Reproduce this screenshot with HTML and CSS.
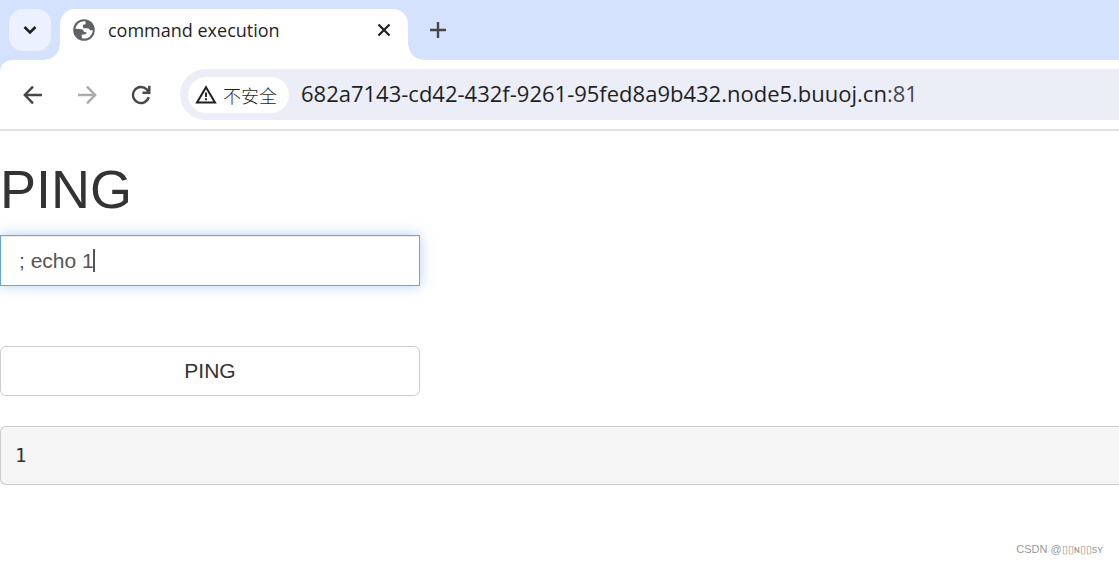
FILE: index.html
```html
<!DOCTYPE html>
<html lang="zh-CN">
<head>
    <meta charset="UTF-8">
    <meta name="viewport" content="width=device-width, initial-scale=1.0">
    <title>command execution</title>
    <link rel="stylesheet" href="styles.css">
</head>
<body>
    <header class="browser">
        <div class="tab-strip">
            <button type="button" class="tab-search" aria-label="Search tabs">
                <svg width="14" height="10" viewBox="0 0 14 10"><path d="M1.500 2 L7 7.500 L12.500 2" fill="none" stroke="#1f1f1f" stroke-width="2.600"/></svg>
            </button>
            <div class="tab">
                <svg class="globe" width="22" height="22" viewBox="0 0 22 22">
                    <circle cx="11" cy="11" r="10.800" fill="#5f6368"/>
                    <path d="M12.500 2.300 C7.500 1.800 3.300 4.800 2.400 9.800 L6.500 10 Q10.600 10 11 13 L13.500 13.200 Q13.800 15.200 11.800 15.400 L8.800 15.600 L8.800 19.300 C15 20.700 19.700 16.300 19.700 11.200 L17 11.200 Q16.400 9 13.800 9.200 L10.600 9.200 Q8.800 6.400 10.800 5.600 L12.500 5.200 Z" fill="#fff"/>
                </svg>
                <span class="tab-title">command execution</span>
                <button type="button" class="tab-close" aria-label="Close tab">
                    <svg width="14" height="14" viewBox="0 0 14 14"><path d="M1.500 1.500 L12.500 12.500 M12.500 1.500 L1.500 12.500" stroke="#1f1f1f" stroke-width="2.200"/></svg>
                </button>
            </div>
            <button type="button" class="new-tab" aria-label="New tab">
                <svg width="16" height="16" viewBox="0 0 16 16"><path d="M8 0 V16 M0 8 H16" stroke="#474747" stroke-width="2.400"/></svg>
            </button>
        </div>
        <nav class="toolbar">
            <button type="button" class="tool" aria-label="Back">
                <svg width="20" height="20" viewBox="0 0 20 20"><path d="M19 10 H2.500 M10 1.700 L1.800 10 L10 18.300" fill="none" stroke="#474747" stroke-width="2.400"/></svg>
            </button>
            <button type="button" class="tool" aria-label="Forward" disabled>
                <svg width="20" height="20" viewBox="0 0 20 20"><path d="M1 10 H17.500 M10 1.700 L18.200 10 L10 18.300" fill="none" stroke="#ababab" stroke-width="2.400"/></svg>
            </button>
            <button type="button" class="tool" aria-label="Reload">
                <svg width="20" height="20" viewBox="0 0 20 20"><path d="M17.700 12.200 A8 8 0 1 1 15.700 4.400 L17.500 6.300 M18.300 0.800 V7.700 H11.500" fill="none" stroke="#474747" stroke-width="2.400"/></svg>
            </button>
            <div class="omnibox">
                <button type="button" class="security">
                    <svg width="22" height="19" viewBox="0 0 22 19"><path d="M11 2.200 L20 17.400 H2 Z" fill="none" stroke="#1f1f1f" stroke-width="2"/><path d="M11 7.500 V12 M11 13.300 V15.300" stroke="#1f1f1f" stroke-width="1.900"/></svg>
                    <span>不安全</span>
                </button>
                <label class="address">
                    <input type="text" class="host" aria-label="Address" spellcheck="false" value="682a7143-cd42-432f-9261-95fed8a9b432.node5.buuoj.cn">
                    <span class="port">:81</span>
                </label>
            </div>
        </nav>
    </header>

    <main>
        <h1>PING</h1>
        <form class="ping-form">
            <div class="field">
                <input type="text" class="form-control" name="ip" aria-label="PING" autocomplete="off" value="; echo 1">
                <span class="caret"></span>
            </div>
            <button type="submit" class="btn">PING</button>
        </form>
        <pre>1</pre>
    </main>
    <footer>CSDN @▯▯ɴ▯▯sʏ</footer>
</body>
</html>
```
FILE: styles.css
```css
* {
    box-sizing: border-box;
}
body {
    margin: 0;
    min-height: 100vh;
    display: flex;
    flex-direction: column;
    background-color: #fff;
    color: #333;
    font-family: "Liberation Sans", Arial, sans-serif;
    overflow-x: hidden;
}
button, input {
    font: inherit;
    color: inherit;
    margin: 0;
    padding: 0;
    border: none;
    background: none;
}
svg {
    display: block;
    flex: none;
}

/* Browser frame */
.browser {
    background-color: #d5e2fd;
    color: #1f1f1f;
    font-family: "Open Sans", "Noto Sans CJK SC", sans-serif;
}
.tab-strip {
    display: flex;
    align-items: flex-end;
    height: 60px;
    padding-left: 9px;
}
.tab-search {
    display: grid;
    place-items: center;
    width: 42px;
    height: 42px;
    margin-right: 9px;
    margin-bottom: 9px;
    border-radius: 14px;
    background-color: #ebf1fe;
}
.tab {
    position: relative;
    display: flex;
    align-items: center;
    width: 348px;
    height: 51px;
    padding: 0 17px 9px 13px;
    border-radius: 15px 15px 0 0;
    background-color: #fff;
}
.tab::before, .tab::after {
    content: "";
    position: absolute;
    bottom: 0;
    width: 15px;
    height: 15px;
}
.tab::before {
    right: 100%;
    background: radial-gradient(circle at 0 0, transparent 14px, #fff 15px);
}
.tab::after {
    left: 100%;
    background: radial-gradient(circle at 100% 0, transparent 14px, #fff 15px);
}
.tab-title {
    flex: 1;
    margin-left: 13px;
    font-size: 18px;
    line-height: 24px;
    white-space: nowrap;
}
.new-tab {
    margin: 0 0 22px 22px;
}
.toolbar {
    display: flex;
    align-items: center;
    gap: 34px;
    height: 71px;
    padding-left: 23px;
    border-bottom: 2px solid #e0e0e0;
    border-top-left-radius: 12px;
    background-color: #fff;
}
.omnibox {
    flex: 1;
    display: flex;
    align-items: center;
    height: 51px;
    margin-left: -5px;
    padding-left: 8px;
    border-radius: 26px 0 0 26px;
    background-color: #ebeef7;
}
.security {
    display: flex;
    align-items: center;
    gap: 6px;
    height: 36px;
    padding: 0 12px 0 7px;
    border-radius: 18px;
    background-color: #fff;
    font-family: "Noto Sans CJK SC", sans-serif;
    font-size: 18px;
    font-weight: 300;
    white-space: nowrap;
}
.address {
    display: flex;
    align-items: center;
    margin-left: 12px;
    padding-bottom: 3px;
    font-size: 22px;
    line-height: 30px;
}
.host {
    field-sizing: content;
    outline: none;
}
.port {
    color: #474747;
}

/* Page */
h1 {
    margin: 28px 0 16px;
    font-size: 54px;
    font-weight: 400;
    line-height: 60px;
}
.ping-form {
    width: 420px;
    max-width: 100%;
}
.field {
    position: relative;
    margin-bottom: 60px;
    font-size: 21px;
}
.form-control {
    display: block;
    width: 100%;
    height: 51px;
    padding: 0 18px;
    border: 1px solid #66a6e6;
    outline: none;
    color: #555;
    box-shadow: inset 0 1px 1px rgba(0, 0, 0, 0.08), 0 0 12px rgba(102, 165, 233, 0.5);
}
.caret {
    position: absolute;
    top: 14px;
    left: 93px;
    width: 2px;
    height: 23px;
    background-color: #555;
}
.btn {
    display: block;
    width: 100%;
    height: 50px;
    border: 1px solid #ccc;
    border-radius: 6px;
    background-color: #fff;
    font-size: 21px;
    cursor: pointer;
}
pre {
    margin: 30px 0 0;
    padding: 14px;
    border: 1px solid #ccc;
    border-right: none;
    border-radius: 6px 0 0 6px;
    background-color: #f5f5f5;
    font-family: "DejaVu Sans Mono", monospace;
    font-size: 19px;
    line-height: 29px;
}
footer {
    margin-top: auto;
    padding: 0 16px 6px;
    color: #999;
    font-size: 11px;
    line-height: 16px;
    text-align: right;
}
```
